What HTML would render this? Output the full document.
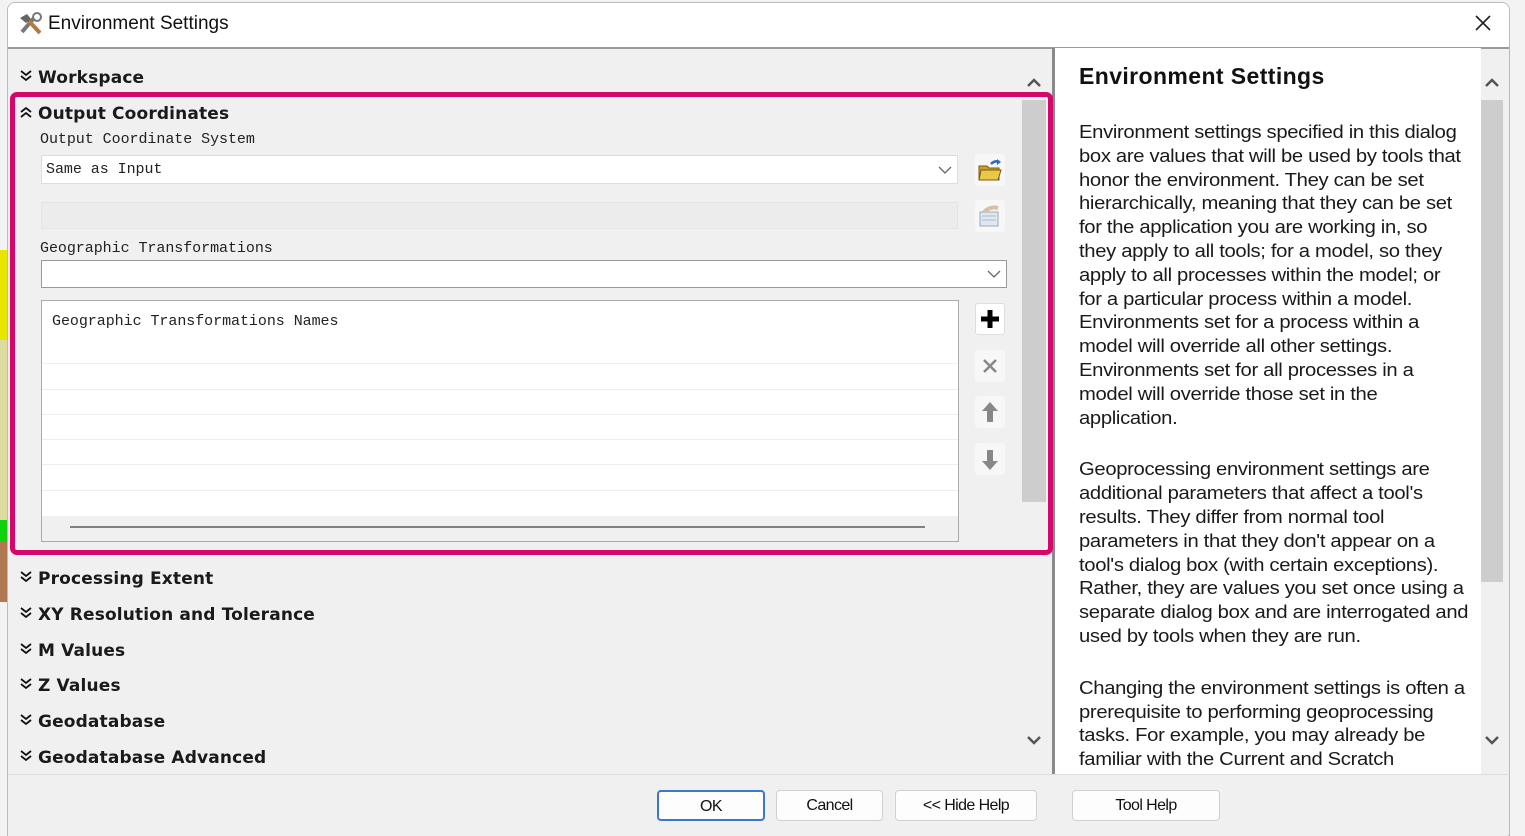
<!DOCTYPE html>
<html><head><meta charset="utf-8"><style>
*{margin:0;padding:0;box-sizing:border-box}
body{width:1525px;height:836px;overflow:hidden;background:#f3f3f3;position:relative;font-family:"Liberation Sans",sans-serif}
.a{position:absolute}
.h{position:absolute;left:20px;font:bold 17px "DejaVu Sans",sans-serif;color:#1a1a1a;letter-spacing:0.15px}
.h svg{display:inline-block;width:18px;height:14px;vertical-align:0px}
.m{position:absolute;font:15px "Liberation Mono","Noto Sans CJK SC",monospace;color:#222;letter-spacing:-0.05px}
.btn{position:absolute;top:790px;height:31px;background:#fdfdfd;border:1px solid #d0d0d0;border-radius:4px;font-size:16px;text-align:center;line-height:29px;color:#111;letter-spacing:-0.6px}
.ib{position:absolute;left:975px;width:30px;height:32px;background:#f7f7f7;border-radius:3px}
.help{position:absolute;left:1079px;top:120px;font-size:18.5px;line-height:23.8px;color:#1a1a1a;letter-spacing:-0.3px;white-space:nowrap;transform:scaleX(1.093);transform-origin:0 0}
.help div{height:23.8px}
.help .g{height:28px}
</style></head><body>
<div class="a" style="left:0;top:250px;width:8px;height:90px;background:#e6e600"></div>
<div class="a" style="left:0;top:340px;width:8px;height:180px;background:#dcdca0"></div>
<div class="a" style="left:0;top:520px;width:8px;height:22px;background:#10d010"></div>
<div class="a" style="left:0;top:542px;width:8px;height:60px;background:#b07850"></div>
<div class="a" style="left:7px;top:2px;width:1503px;height:834px;background:#f0f0f0;border:1px solid #bbb;border-radius:8px 8px 0 0;overflow:hidden">
  <div class="a" style="left:0;top:0;width:1503px;height:46px;background:#fff;border-bottom:2px solid #9a9a9a"></div>
</div>
<svg class="a" style="left:18px;top:12px" width="26" height="24" viewBox="0 0 26 24"><path d="M4 20 L16 6" stroke="#777" stroke-width="4"/><path d="M10 8 L22 21" stroke="#b07a40" stroke-width="4"/><path d="M2 6 L9 2 L13 7 L8 11Z" fill="#666"/><circle cx="19" cy="5" r="4" fill="none" stroke="#777" stroke-width="2"/></svg>
<div class="a" style="left:48px;top:13px;font-size:19px;color:#111">Environment Settings</div>
<svg class="a" style="left:1475px;top:15px" width="16" height="16"><path d="M1 1l14 14M15 1L1 15" stroke="#222" stroke-width="1.6"/></svg>
<div class="a" style="left:1052px;top:48px;width:3px;height:726px;background:#8a8a8a"></div>
<div class="a" style="left:1055px;top:48px;width:426px;height:726px;background:#fff;overflow:hidden">
<div class="help" style="left:24px;top:72px">
<div>Environment settings specified in this dialog</div>
<div>box are values that will be used by tools that</div>
<div>honor the environment. They can be set</div>
<div>hierarchically, meaning that they can be set</div>
<div>for the application you are working in, so</div>
<div>they apply to all tools; for a model, so they</div>
<div>apply to all processes within the model; or</div>
<div>for a particular process within a model.</div>
<div>Environments set for a process within a</div>
<div>model will override all other settings.</div>
<div>Environments set for all processes in a</div>
<div>model will override those set in the</div>
<div>application.</div>
<div class="g"></div>
<div>Geoprocessing environment settings are</div>
<div>additional parameters that affect a tool's</div>
<div>results. They differ from normal tool</div>
<div>parameters in that they don't appear on a</div>
<div>tool's dialog box (with certain exceptions).</div>
<div>Rather, they are values you set once using a</div>
<div>separate dialog box and are interrogated and</div>
<div>used by tools when they are run.</div>
<div class="g"></div>
<div>Changing the environment settings is often a</div>
<div>prerequisite to performing geoprocessing</div>
<div>tasks. For example, you may already be</div>
<div>familiar with the Current and Scratch</div>
</div>
</div>
<div class="a" style="left:1481px;top:100px;width:22px;height:482px;background:#cdcdcd"></div>
<svg class="a" style="left:1484px;top:76px" width="16" height="12"><path d="M2 10l6-6 6 6" stroke="#555" stroke-width="2.5" fill="none"/></svg>
<svg class="a" style="left:1484px;top:735px" width="16" height="12"><path d="M2 2l6 6 6-6" stroke="#555" stroke-width="2.5" fill="none"/></svg>
<div class="a" style="left:1079px;top:63px;font-size:23px;font-weight:bold;color:#111;letter-spacing:0.4px">Environment Settings</div>
<div class="a" style="left:8px;top:774px;width:1500px;height:62px;background:#f0f0f0;border-top:1px solid #ddd"></div>
<div class="a" style="left:1022px;top:100px;width:24px;height:402px;background:#cdcdcd"></div>
<svg class="a" style="left:1026px;top:76px" width="16" height="12"><path d="M2 10l6-6 6 6" stroke="#555" stroke-width="2.5" fill="none"/></svg>
<svg class="a" style="left:1026px;top:735px" width="16" height="12"><path d="M2 2l6 6 6-6" stroke="#555" stroke-width="2.5" fill="none"/></svg>
<div class="h" style="top:68px"><svg viewBox="0 0 18 14"><path d="M1 2l5 4 5-4M1 7l5 4 5-4" stroke="#111" stroke-width="1.8" fill="none"/></svg>Workspace</div>
<div class="h" style="top:104px"><svg viewBox="0 0 18 14"><path d="M1 7l5-4 5 4M1 12l5-4 5 4" stroke="#111" stroke-width="1.8" fill="none"/></svg>Output Coordinates</div>
<div class="m" style="left:40px;top:131px">Output Coordinate System</div>
<div class="a" style="left:41px;top:155px;width:917px;height:29px;background:#fff;border:1px solid #ddd"></div>
<div class="m" style="left:46px;top:161px">Same as Input</div>
<svg class="a" style="left:938px;top:165px" width="14" height="10"><path d="M1 2l6 6 6-6" stroke="#666" stroke-width="1.3" fill="none"/></svg>
<div class="ib" style="top:154px"></div>
<svg class="a" style="left:977px;top:158px" width="26" height="24"><path d="M2 8h8l2 2h10v12H2z" fill="#c9a028" stroke="#7a5a10"/><path d="M4 12h20l-3 10H2z" fill="#e8c848" stroke="#7a5a10"/><path d="M14 6 Q18 2 22 4" stroke="#2a6ac0" stroke-width="2.5" fill="none"/><path d="M20 1l4 3-4 3z" fill="#2a6ac0"/></svg>
<div class="a" style="left:41px;top:202px;width:917px;height:27px;background:#ececec;border:1px solid #e4e4e4"></div>
<div class="ib" style="top:200px"></div>
<svg class="a" style="left:978px;top:204px" width="24" height="24"><rect x="2" y="8" width="18" height="14" fill="#dde8f0" stroke="#99aabb"/><path d="M4 12h14M4 16h14" stroke="#aabbcc"/><path d="M6 8 Q12 2 20 4" stroke="#d8c0a0" stroke-width="4" fill="none"/></svg>
<div class="m" style="left:40px;top:240px">Geographic Transformations</div>
<div class="a" style="left:41px;top:260px;width:966px;height:28px;background:#fff;border:1px solid #999"></div>
<svg class="a" style="left:987px;top:269px" width="14" height="10"><path d="M1 2l6 6 6-6" stroke="#666" stroke-width="1.3" fill="none"/></svg>
<div class="a" style="left:41px;top:300px;width:918px;height:242px;background:#fff;border:1px solid #aaa"></div>
<div class="m" style="left:52px;top:313px">Geographic Transformations Names</div>
<div class="a" style="left:42px;top:363px;width:916px;height:1px;background:#eee"></div>
<div class="a" style="left:42px;top:389px;width:916px;height:1px;background:#eee"></div>
<div class="a" style="left:42px;top:414px;width:916px;height:1px;background:#eee"></div>
<div class="a" style="left:42px;top:439px;width:916px;height:1px;background:#eee"></div>
<div class="a" style="left:42px;top:464px;width:916px;height:1px;background:#eee"></div>
<div class="a" style="left:42px;top:490px;width:916px;height:1px;background:#eee"></div>
<div class="a" style="left:42px;top:516px;width:916px;height:25px;background:#f0f0f0"></div>
<div class="a" style="left:70px;top:526px;width:855px;height:2px;background:#808080"></div>
<div class="ib" style="top:303px;background:#fff;border:1px solid #ddd"></div>
<svg class="a" style="left:979px;top:308px" width="22" height="22"><path d="M11 2v18M2 11h18" stroke="#000" stroke-width="5"/></svg>
<div class="ib" style="top:350px"></div>
<svg class="a" style="left:982px;top:358px" width="16" height="16"><path d="M2 2l12 12M14 2L2 14" stroke="#888" stroke-width="2.5"/></svg>
<div class="ib" style="top:396px"></div>
<svg class="a" style="left:980px;top:400px" width="20" height="24"><path d="M10 2l8 9h-5v11H7V11H2z" fill="#888"/></svg>
<div class="ib" style="top:443px"></div>
<svg class="a" style="left:980px;top:448px" width="20" height="24"><path d="M10 22l8-9h-5V2H7v11H2z" fill="#888"/></svg>
<div class="a" style="left:10px;top:92px;width:1043px;height:463px;border:5px solid #d4086a;border-radius:7px"></div>
<div class="h" style="top:569px"><svg viewBox="0 0 18 14"><path d="M1 2l5 4 5-4M1 7l5 4 5-4" stroke="#111" stroke-width="1.8" fill="none"/></svg>Processing Extent</div>
<div class="h" style="top:605px"><svg viewBox="0 0 18 14"><path d="M1 2l5 4 5-4M1 7l5 4 5-4" stroke="#111" stroke-width="1.8" fill="none"/></svg>XY Resolution and Tolerance</div>
<div class="h" style="top:641px"><svg viewBox="0 0 18 14"><path d="M1 2l5 4 5-4M1 7l5 4 5-4" stroke="#111" stroke-width="1.8" fill="none"/></svg>M Values</div>
<div class="h" style="top:676px"><svg viewBox="0 0 18 14"><path d="M1 2l5 4 5-4M1 7l5 4 5-4" stroke="#111" stroke-width="1.8" fill="none"/></svg>Z Values</div>
<div class="h" style="top:712px"><svg viewBox="0 0 18 14"><path d="M1 2l5 4 5-4M1 7l5 4 5-4" stroke="#111" stroke-width="1.8" fill="none"/></svg>Geodatabase</div>
<div class="h" style="top:748px"><svg viewBox="0 0 18 14"><path d="M1 2l5 4 5-4M1 7l5 4 5-4" stroke="#111" stroke-width="1.8" fill="none"/></svg>Geodatabase Advanced</div>
<div class="btn" style="left:657px;width:108px;border:2px solid #3a78c8">OK</div>
<div class="btn" style="left:776px;width:107px">Cancel</div>
<div class="btn" style="left:895px;width:142px">&lt;&lt; Hide Help</div>
<div class="btn" style="left:1072px;width:148px">Tool Help</div>
</body></html>
